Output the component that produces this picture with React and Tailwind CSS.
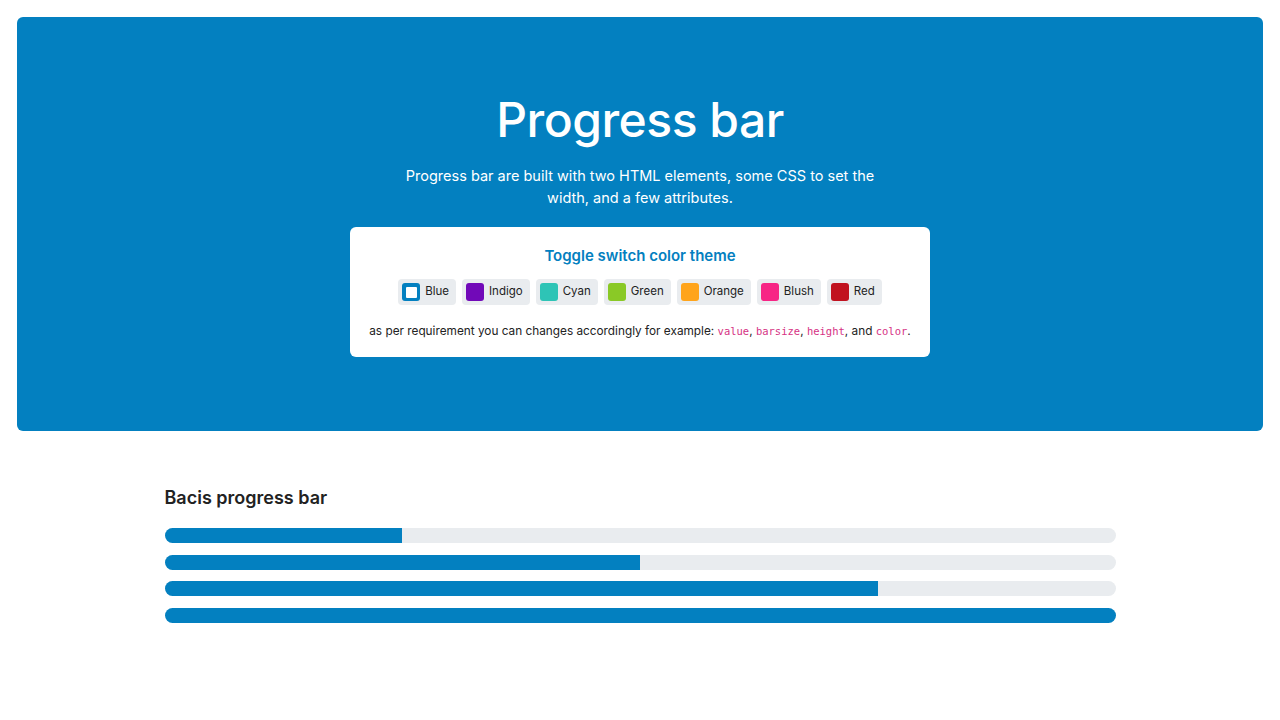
import React from "react";

const themes = [
  { name: "Blue", color: "bg-[#0380c0]", active: true },
  { name: "Indigo", color: "bg-[#7109b8]" },
  { name: "Cyan", color: "bg-[#2ec4b6]" },
  { name: "Green", color: "bg-[#8ac926]" },
  { name: "Orange", color: "bg-[#ffa41b]" },
  { name: "Blush", color: "bg-[#f72585]" },
  { name: "Red", color: "bg-[#c1121f]" },
];

const bars = [25, 50, 75, 100];

export default function App() {
  return (
    <div className="min-h-screen bg-white font-['Inter',sans-serif] text-[#222]">
      <div className="p-[17px]">
        <div className="rounded-md bg-[#0380c0] pt-[73px] pb-[74px] flex flex-col items-center text-white">
          <h1 className="text-[48px] leading-[60px] font-medium tracking-[-0.5px]">Progress bar</h1>
          <p className="mt-[15px] text-[14.5px] leading-[22px] text-center">
            Progress bar are built with two HTML elements, some CSS to set the
            <br />
            width, and a few attributes.
          </p>
          <div className="mt-[18px] w-[580px] rounded-md bg-white px-3 pt-[18px] pb-[17px] flex flex-col items-center text-[#222]">
            <div className="text-[15px] leading-[22px] font-semibold text-[#0380c0]">Toggle switch color theme</div>
            <div className="mt-[12px] flex gap-[6px]">
              {themes.map((t) => (
                <div key={t.name} className="flex items-center gap-[5px] h-[26px] rounded-[4px] bg-[#e9ecef] pl-[4px] pr-[7px]">
                  {t.active ? (
                    <span className="w-[18px] h-[18px] rounded-[3px] bg-[#0380c0] flex items-center justify-center">
                      <span className="w-[11px] h-[11px] rounded-[1px] bg-white"></span>
                    </span>
                  ) : (
                    <span className={`w-[18px] h-[18px] rounded-[3px] ${t.color}`}></span>
                  )}
                  <span className="text-[11.5px] leading-none text-[#222]">{t.name}</span>
                </div>
              ))}
            </div>
            <p className="mt-[17px] text-[11.8px] leading-[18px] text-[#222] whitespace-nowrap">
              as per requirement you can changes accordingly for example:{" "}
              <code className="font-['DejaVu_Sans_Mono',monospace] text-[10.5px] text-[#d63384]">value</code>,{" "}
              <code className="font-['DejaVu_Sans_Mono',monospace] text-[10.5px] text-[#d63384]">barsize</code>,{" "}
              <code className="font-['DejaVu_Sans_Mono',monospace] text-[10.5px] text-[#d63384]">height</code>, and{" "}
              <code className="font-['DejaVu_Sans_Mono',monospace] text-[10.5px] text-[#d63384]">color</code>.
            </p>
          </div>
        </div>
      </div>
      <div className="w-[951px] mx-auto mt-[38px]">
        <h2 className="text-[18px] leading-[24px] font-semibold text-[#222]">Bacis progress bar</h2>
        <div className="mt-[18px] flex flex-col gap-[11.5px]">
          {bars.map((v) => (
            <div key={v} className="h-[15px] w-full rounded-full bg-[#e9ecef] overflow-hidden">
              <div className="h-full bg-[#0380c0]" style={{ width: `${v}%` }}></div>
            </div>
          ))}
        </div>
      </div>
    </div>
  );
}
